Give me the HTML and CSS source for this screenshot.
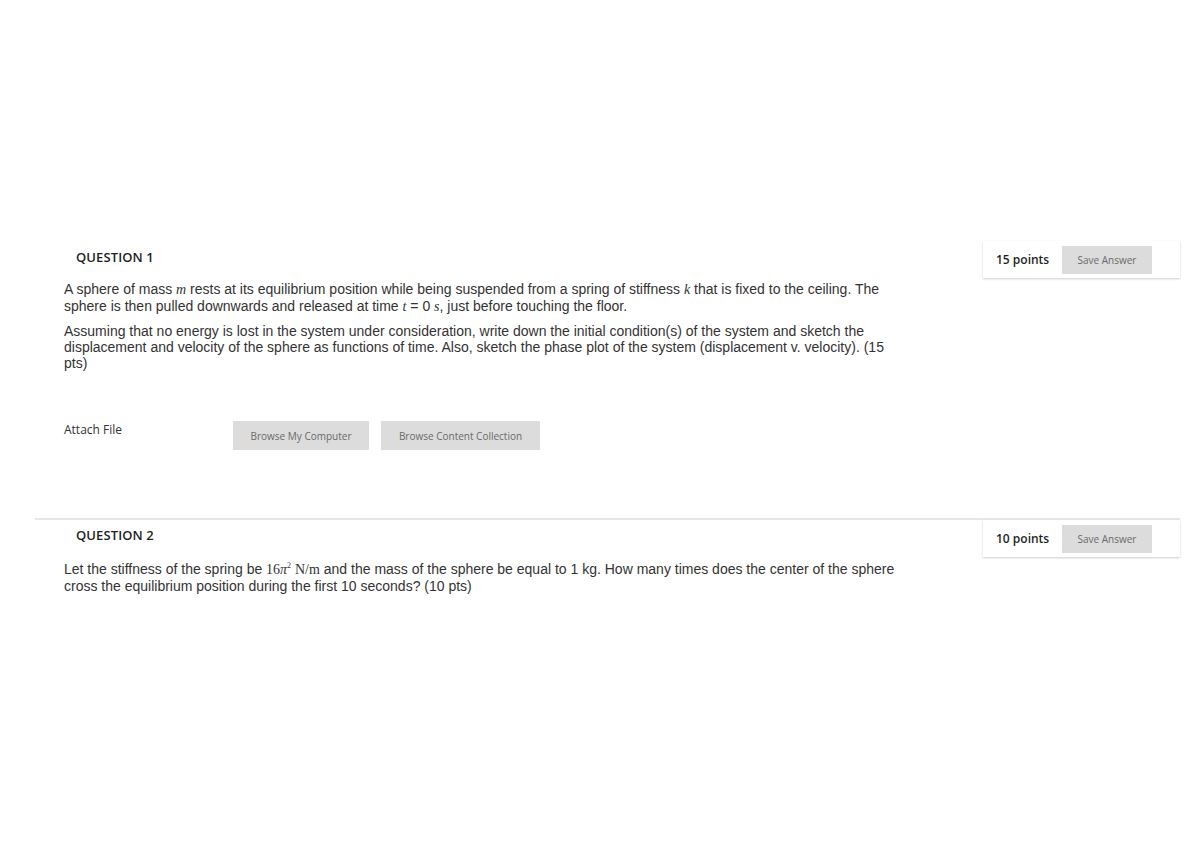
FILE: index.html
```html
<!DOCTYPE html>
<html lang="en">
<head>
  <meta charset="UTF-8">
  <title>Test</title>
  <link rel="stylesheet" href="styles.css">
</head>
<body>
  <div class="page">

    <div class="question first">
      <div class="q-body">
        <h3 class="q-title">QUESTION 1</h3>
        <div class="q-text">
          <p>A sphere of mass <i class="math">m</i> rests at its equilibrium position while being suspended from a spring of stiffness <i class="math">k</i> that is fixed to the ceiling. The sphere is then pulled downwards and released at time <i class="math">t</i> = 0 <i class="math">s</i>, just before touching the floor.</p>
          <p>Assuming that no energy is lost in the system under consideration, write down the initial condition(s) of the system and sketch the displacement and velocity of the sphere as functions of time. Also, sketch the phase plot of the system (displacement v. velocity). (15 pts)</p>
        </div>
        <div class="attach">
          <span class="attach-label">Attach File</span>
          <button class="btn">Browse My Computer</button>
          <button class="btn">Browse Content Collection</button>
        </div>
      </div>
      <div class="q-points">
        <span class="pts">15 points</span>
        <button class="btn save">Save Answer</button>
      </div>
    </div>

    <div class="question second">
      <div class="q-body">
        <h3 class="q-title">QUESTION 2</h3>
        <div class="q-text">
          <p>Let the stiffness of the spring be <span class="math">16<i>π</i><sup>2</sup></span> <span class="math">N/m</span> and the mass of the sphere be equal to 1 kg. How many times does the center of the sphere cross the equilibrium position during the first 10 seconds? (10 pts)</p>
        </div>
      </div>
      <div class="q-points">
        <span class="pts">10 points</span>
        <button class="btn save">Save Answer</button>
      </div>
    </div>

  </div>
</body>
</html>
```

FILE: styles.css
```css
body {
  margin: 0;
  background: #ffffff;
  font-family: "Liberation Sans", Arial, sans-serif;
}

.page {
  padding: 241px 20px 0 35px;
}

.question {
  display: flex;
  align-items: flex-start;
}

.question.second {
  margin-top: 68px;
  border-top: 2px solid #e6e6e6;
}

.q-body {
  flex: 1;
  padding-left: 29px;
}

.q-title {
  margin: 7px 0 0 12px;
  font-family: "Open Sans", sans-serif;
  font-size: 13px;
  line-height: 18px;
  font-weight: 600;
  color: #1f1f1f;
  letter-spacing: 0.1px;
}

.second .q-title {
  margin-top: 6px;
}

.q-text {
  width: 845px;
  margin-top: 15px;
  font-size: 14px;
  line-height: 16px;
  color: #333;
}

.second .q-text {
  margin-top: 14px;
}

.q-text p {
  margin: 0 0 8px;
}

.math {
  font-family: "Liberation Serif", serif;
  font-size: 14px;
}

.math i {
  font-family: "Liberation Serif", serif;
}

.math sup {
  font-size: 8px;
}

.attach {
  display: flex;
  align-items: flex-start;
  margin-top: 50px;
}

.attach-label {
  width: 169px;
  font-family: "Open Sans", sans-serif;
  font-size: 12px;
  color: #333;
  line-height: 17px;
}

.btn {
  font-family: "Open Sans", sans-serif;
  font-size: 10px;
  color: #6a6a6a;
  background: #dcdcdc;
  border: 0;
  padding: 0 12px;
  height: 29px;
  margin: 0 12px 0 0;
}

.attach .btn:first-of-type {
  width: 136px;
}

.attach .btn:last-of-type {
  width: 159px;
}

.q-points {
  display: flex;
  align-items: center;
  width: 197px;
  height: 37px;
  padding-left: 13px;
  box-sizing: border-box;
  background: #fff;
  box-shadow: 0 1px 2px rgba(0, 0, 0, 0.2);
}

.pts {
  width: 66px;
  font-family: "Open Sans", sans-serif;
  font-size: 12px;
  font-weight: 600;
  color: #1f1f1f;
}

.btn.save {
  width: 90px;
  height: 28px;
  padding: 0;
}
```
